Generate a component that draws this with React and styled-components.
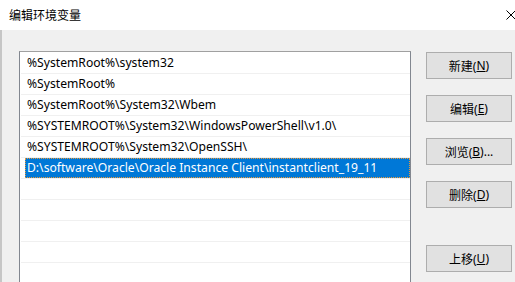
import React from "react";
import styled, { createGlobalStyle } from "styled-components";

const paths = [
	"%SystemRoot%\\system32",
	"%SystemRoot%",
	"%SystemRoot%\\System32\\Wbem",
	"%SYSTEMROOT%\\System32\\WindowsPowerShell\\v1.0\\",
	"%SYSTEMROOT%\\System32\\OpenSSH\\",
	"D:\\software\\Oracle\\Oracle Instance Client\\instantclient_19_11",
	"",
	"",
	"",
	"",
	"",
];

const selectedIndex = 5;

const buttons = [
	{ label: "新建", key: "N" },
	{ label: "编辑", key: "E" },
	{ label: "浏览", key: "B", suffix: "..." },
	{ label: "删除", key: "D" },
	{ label: "上移", key: "U", gap: 37 },
];

const App = () => {
	return (
		<>
			<GlobalStyle />
			<Window>
				<TitleBar>
					<Title>编辑环境变量</Title>
					<Close width="10" height="10" viewBox="0 0 10 10">
						<path d="M0.5 0.5 L9.5 9.5 M9.5 0.5 L0.5 9.5" stroke="#000" strokeWidth="1" />
					</Close>
				</TitleBar>
				<Body>
					<ListBox>
						{paths.map((p, i) => (
							<Row key={i}>
								<Cell selected={i === selectedIndex}>{p}</Cell>
							</Row>
						))}
					</ListBox>
					<ButtonColumn>
						{buttons.map((b) => (
							<Button key={b.key} gap={b.gap}>
								{b.label}(<u>{b.key}</u>){b.suffix}
							</Button>
						))}
					</ButtonColumn>
				</Body>
			</Window>
		</>
	);
};

export default App;

const GlobalStyle = createGlobalStyle`
	html, body {
		margin: 0;
		padding: 0;
		overflow: hidden;
	}
	body {
		font-family: "Noto Sans", "Noto Sans CJK SC", sans-serif;
		font-size: 12px;
		color: #000;
	}
`;

const Window = styled.div`
	width: 515px;
	height: 282px;
	display: flex;
	flex-direction: column;
	overflow: hidden;
	background: #f0f0f0;
`;

const TitleBar = styled.div`
	height: 30px;
	flex: none;
	background: #fff;
	display: flex;
	align-items: center;
	justify-content: space-between;
	padding-left: 9px;
`;

const Title = styled.span`
	font-family: "Noto Sans CJK SC", sans-serif;
	font-size: 12px;
	margin-top: -1px;
`;

const Close = styled.svg`
	margin-right: -1px;
	margin-top: -1px;
	flex: none;
`;

const Body = styled.div`
	flex: 1;
	display: flex;
	align-items: flex-start;
	gap: 15px;
	padding: 21px 0 0 17px;
	border-left: 2px solid #c6c6c6;
`;

const ListBox = styled.div`
	width: 390px;
	height: 300px;
	flex: none;
	background: #fff;
	border: 1px solid #828790;
	border-top-color: #a0a0a0;
	padding-top: 1px;
`;

const Row = styled.div`
	height: 20px;
	margin-left: 1px;
	border-bottom: 1px solid #f0f0f0;
	display: flex;
`;

const Cell = styled.div`
	flex: 1;
	margin-left: 4px;
	padding-left: 2px;
	line-height: 20px;
	font-size: 12.15px;
	white-space: nowrap;
	overflow: hidden;
	background: ${(props) => (props.selected ? "#0078d7" : "transparent")};
	color: ${(props) => (props.selected ? "#fff" : "#000")};
	outline: ${(props) => (props.selected ? "1px dotted #e89a3c" : "none")};
	outline-offset: -1px;
`;

const ButtonColumn = styled.div`
	display: flex;
	flex-direction: column;
	padding-top: 1px;
`;

const Button = styled.div`
	width: 84px;
	height: 25px;
	margin-top: ${(props) => (props.gap ? props.gap : 16)}px;
	&:first-child {
		margin-top: 0;
	}
	background: #e1e1e1;
	border: 1px solid #adadad;
	display: flex;
	align-items: center;
	justify-content: center;
	font-family: "Noto Sans", "Noto Sans CJK SC", sans-serif;
	font-size: 12px;

	u {
		text-underline-offset: 1px;
	}
`;
